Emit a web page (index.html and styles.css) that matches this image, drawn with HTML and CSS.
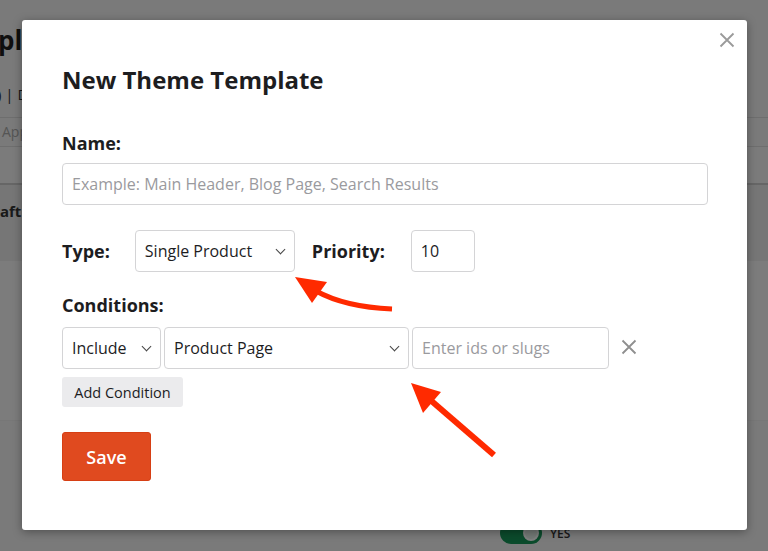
FILE: index.html
```html
<!DOCTYPE html>
<html>
<head>
<meta charset="utf-8">
<link rel="stylesheet" href="styles.css">
</head>
<body>
<div class="page">
  <div class="bg-title">Templates</div>
  <div class="bg-sub">(3) | Drafts</div>
  <div class="bg-search">Apply</div>
  <div class="bg-row"></div>
  <div class="bg-draft">Draft</div>
  <div class="bg-band"></div>
  <div class="bg-bottom">
    <span class="toggle"><span class="knob"></span></span>
    <span class="yes">YES</span>
  </div>
</div>
<div class="overlay"></div>
<div class="modal">
  <button class="close" aria-label="Close">
    <svg width="16" height="16" viewBox="0 0 16 16"><path d="M1.5 1.5 L14.5 14.5 M14.5 1.5 L1.5 14.5" stroke="#9a9a9a" stroke-width="1.8" fill="none"/></svg>
  </button>
  <h2 class="title">New Theme Template</h2>
  <label class="label name-label">Name:</label>
  <input class="field name-field" type="text" placeholder="Example: Main Header, Blog Page, Search Results">
  <div class="type-row">
    <span class="label">Type:</span>
    <div class="select type-select">Single Product<span class="chev"></span></div>
    <span class="label priority-label">Priority:</span>
    <div class="field priority">10</div>
  </div>
  <div class="label cond-label">Conditions:</div>
  <div class="cond-row">
    <div class="select inc-select">Include<span class="chev"></span></div>
    <div class="select page-select">Product Page<span class="chev"></span></div>
    <div class="field ids">Enter ids or slugs</div>
    <svg class="remove" width="16" height="16" viewBox="0 0 16 16"><path d="M1.5 1.5 L14.5 14.5 M14.5 1.5 L1.5 14.5" stroke="#8f8f8f" stroke-width="1.8" fill="none"/></svg>
  </div>
  <button class="add-btn">Add Condition</button>
  <button class="save-btn">Save</button>
</div>
<svg class="arrows" width="768" height="551" viewBox="0 0 768 551">
  <path d="M316 291 Q345 307 392 309" stroke="#ff2a00" stroke-width="5" fill="none"/>
  <polygon points="295,277 327,282 312,303" fill="#ff2a00"/>
  <line x1="494" y1="455" x2="428" y2="398" stroke="#ff2a00" stroke-width="6"/>
  <polygon points="411,383 441,392 423,413" fill="#ff2a00"/>
</svg>
</body>
</html>
```
FILE: styles.css
```css
* { box-sizing: border-box; }
html, body { margin: 0; padding: 0; }
body {
  width: 768px;
  height: 551px;
  overflow: hidden;
  position: relative;
  font-family: "Open Sans", "Noto Sans", sans-serif;
  background: #f4f4f4;
  color: #1d1d1f;
}
.page { width: 768px; height: 551px; }
.bg-title {
  font-size: 26px; font-weight: 700; color: #1e1e1e;
  margin-left: -58px; padding-top: 22px; line-height: 36px;
}
.bg-sub { font-size: 15px; color: #333; margin-left: -16px; padding-top: 26px; line-height: 20px; padding-bottom: 13px; border-bottom: 1px solid #ddd; }
.bg-search { font-size: 14px; color: #aaa; padding: 6px 0 6px 2px; border-bottom: 1px solid #ddd; line-height: 16px; }
.bg-row { height: 38px; border-bottom: 2px solid #ccc; background: #f6f6f6; }
.bg-draft { font-size: 15px; font-weight: 700; color: #333; margin-left: -18px; padding: 16px 0 40px 0; line-height: 20px; background: #ececec; }
.bg-band { height: 160px; background: #f8f8f8; border-bottom: 1px solid #eee; }
.bg-bottom { display: flex; align-items: center; gap: 8px; padding-left: 500px; padding-top: 101px; }
.toggle { width: 42px; height: 22px; border-radius: 11px; background: #169658; position: relative; display: inline-block; }
.knob { position: absolute; right: 3px; top: 3px; width: 16px; height: 16px; border-radius: 50%; background: #e8f5ee; border: 2px solid #fff; }
.yes { font-size: 12px; color: #333; font-weight: 600; }

.overlay { position: absolute; inset: 0; background: rgba(0,0,0,0.5); }

.modal {
  position: absolute;
  left: 22px; top: 20px;
  width: 725px; height: 510px;
  background: #fff;
  border-radius: 3px;
  box-shadow: 0 2px 10px rgba(0,0,0,0.35);
  padding: 44px 40px 0 40px;
}
.close {
  position: absolute; right: 12px; top: 12px;
  border: 0; background: none; padding: 0; width: 16px; height: 16px; cursor: pointer;
}
.close svg { display: block; }
.title { margin: 0; font-size: 24px; font-weight: 700; line-height: 32px; color: #1d1d1f; }
.label { font-size: 18px; font-weight: 700; color: #1d1d1f; line-height: 24px; }
.name-label { display: block; margin-top: 35px; }
.field {
  border: 1px solid #d4d4d6; border-radius: 4px; background: #fff;
  height: 42px; font-family: inherit; font-size: 16px; color: #1d1d1f;
  padding: 0 9px; display: flex; align-items: center;
}
.name-field { width: 646px; margin-top: 8px; outline: none; }
.name-field::placeholder { color: #9a9a9e; }
.type-row { display: flex; align-items: center; margin-top: 25px; }
.select {
  border: 1px solid #d4d4d6; border-radius: 4px; background: #fff;
  height: 42px; font-size: 16px; color: #1d1d1f;
  display: flex; align-items: center; justify-content: space-between;
  padding: 0 9px;
}
.chev {
  width: 7px; height: 7px; border-right: 1.5px solid #444; border-bottom: 1.5px solid #444;
  transform: rotate(45deg); margin-top: -4px; margin-right: 1px;
}
.type-select { width: 160px; margin-left: 25px; }
.priority-label { margin-left: 17px; }
.priority { width: 64px; margin-left: 26px; }
.cond-label { margin-top: 21px; }
.cond-row { display: flex; align-items: center; gap: 3px; margin-top: 10px; }
.inc-select { width: 99px; }
.page-select { width: 245px; }
.ids { width: 197px; color: #9a9a9e; }
.remove { margin-left: 9px; margin-top: -3px; }
.add-btn {
  display: block; margin-top: 8px;
  border: 0; border-radius: 3px; background: #ebebed;
  font-family: inherit; font-size: 14.5px; color: #1d1d1f; font-weight: 500;
  height: 30px; width: 121px; padding: 0;
}
.save-btn {
  display: block; margin-top: 25px;
  border: 1px solid #d63f14; border-radius: 3px; background: #e04a1f;
  font-family: inherit; font-size: 18px; font-weight: 600; color: #fff;
  width: 89px; height: 49px; padding: 0;
}
.arrows { position: absolute; left: 0; top: 0; pointer-events: none; }
```
